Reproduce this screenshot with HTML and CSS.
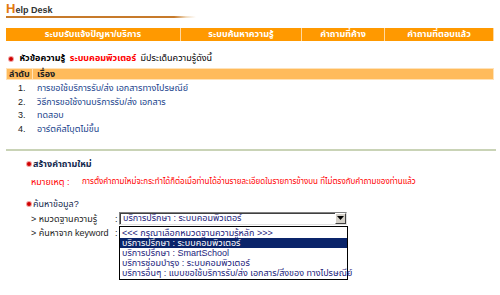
FILE: index.html
```html
<!DOCTYPE html>
<html lang="th">
<head>
<meta charset="utf-8">
<title>Help Desk</title>
<link rel="stylesheet" href="styles.css">
</head>
<body>
<div class="page">
  <div class="brand"><span class="brand-h">H</span><span class="brand-rest">elp Desk</span></div>
  <div class="brand-line"></div>

  <div class="nav">
    <div class="nav-item w1">ระบบรับแจ้งปัญหา/บริการ</div>
    <div class="nav-item w2">ระบบค้นหาความรู้</div>
    <div class="nav-item w3">คำถามที่ค้าง</div>
    <div class="nav-item w4">คำถามที่ตอบแล้ว</div>
  </div>

  <div class="topic">
    <span class="dot"></span>
    <span class="topic-label">หัวข้อความรู้</span>
    <span class="topic-name">ระบบคอมพิวเตอร์</span>
    <span class="topic-tail">มีประเด็นความรู้ดังนี้</span>
  </div>

  <div class="list">
    <div class="list-head">
      <div class="col-no">ลำดับ</div>
      <div class="col-title">เรื่อง</div>
    </div>
    <div class="rows">
      <div class="row"><div class="num">1.</div><div class="link">การขอใช้บริการรับ/ส่ง เอกสารทางไปรษณีย์</div></div>
      <div class="row"><div class="num">2.</div><div class="link">วิธีการขอใช้งานบริการรับ/ส่ง เอกสาร</div></div>
      <div class="row"><div class="num">3.</div><div class="link">ทดสอบ</div></div>
      <div class="row"><div class="num">4.</div><div class="link">อาร์ตคีสโบุตไม่ขึ้น</div></div>
    </div>
  </div>

  <div class="sep"></div>

  <div class="section">
    <div class="sec-title"><span class="dot"></span><span class="bold-navy">สร้างคำถามใหม่</span></div>
    <div class="note">
      <span class="note-label">หมายเหตุ :</span>
      <span class="note-text">การตั้งคำถามใหม่จะกระทำได้ก็ต่อเมื่อท่านได้อ่านรายละเอียดในรายการข้างบน ที่ไม่ตรงกับคำถามของท่านแล้ว</span>
    </div>
  </div>

  <div class="section search">
    <div class="sec-title"><span class="dot"></span><span class="plain">ค้นหาข้อมูล?</span></div>
    <div class="field first">
      <div class="field-label">&gt; หมวดฐานความรู้</div>
      <div class="colon">:</div>
      <div class="select-wrap">
        <div class="select">
          <span class="select-value">บริการปรึกษา : ระบบคอมพิวเตอร์</span>
          <span class="select-btn"><svg width="7" height="4" viewBox="0 0 7 4"><path d="M0 0h7L3.5 4z" fill="#000"/></svg></span>
        </div>
        <div class="dropdown">
          <div class="opt">&lt;&lt;&lt; กรุณาเลือกหมวดฐานความรู้หลัก &gt;&gt;&gt;</div>
          <div class="opt selected">บริการปรึกษา : ระบบคอมพิวเตอร์</div>
          <div class="opt">บริการปรึกษา : SmartSchool</div>
          <div class="opt">บริการซ่อมบำรุง : ระบบคอมพิวเตอร์</div>
          <div class="opt">บริการอื่นๆ : แบบขอใช้บริการรับ/ส่ง เอกสาร/สิ่งของ ทางไปรษณีย์</div>
        </div>
      </div>
    </div>
    <div class="field">
      <div class="field-label">&gt; ค้นหาจาก keyword</div>
      <div class="colon">:</div>
    </div>
  </div>
</div>
</body>
</html>
```

FILE: styles.css
```css
* { box-sizing: border-box; }
html, body { margin: 0; padding: 0; background: #fff; }
body {
  font-family: "Liberation Sans", "Noto Sans Thai", sans-serif;
  font-size: 9px;
  color: #000;
}
.page { width: 500px; min-height: 295px; padding: 3px 6px 0 6px; }

.brand { height: 12px; line-height: 12px; display: flex; align-items: baseline; }
.brand-h { color: #e2790f; font-weight: bold; font-size: 13px; }
.brand-rest { color: #333; font-weight: bold; font-size: 9px; }
.brand-line {
  margin-top: 1px;
  width: 190px;
  height: 2px;
  background: linear-gradient(to right, #c77a2a 0, #c77a2a 168px, #f1dcc0 180px, #fff 190px);
}

.nav {
  margin-top: 10px;
  display: flex;
  width: 488px;
  height: 13px;
  background: #ff9900;
}
.nav-item {
  color: #fff;
  font-weight: bold;
  line-height: 13px;
  text-align: center;
  border-right: 1px solid #ffd9a0;
  white-space: nowrap;
}
.w1 { width: 175px; }
.w2 { width: 121px; }
.w3 { width: 83px; }
.w4 { width: 109px; }

.dot {
  display: inline-block;
  width: 4px; height: 4px;
  border-radius: 50%;
  background: #d00000;
  box-shadow: 0 0 0 1px #f2a0a0;
  vertical-align: middle;
  margin-right: 4px;
}

.topic { margin-top: 11px; padding-left: 3px; height: 13px; line-height: 13px; white-space: nowrap; }
.topic-label { font-weight: bold; }
.topic-name { font-weight: bold; color: #ff0000; margin-left: 2px; }
.topic-tail { margin-left: 2px; }

.list { margin-top: 3px; width: 488px; }
.list-head {
  display: flex;
  height: 12px;
  background: #ffbb5c;
  border: 1px solid #ffe2b8;
  line-height: 10px;
  font-weight: bold;
  color: #222;
}
.list-head .col-no { width: 26px; padding-left: 2px; border-right: 1px solid #ffe2b8; }
.list-head .col-title { padding-left: 4px; }
.rows { padding-top: 2px; }
.row { display: flex; height: 13.7px; line-height: 13.7px; }
.num { width: 31px; padding-left: 12px; color: #222; }
.link { color: #203f8c; }

.sep { margin-top: 12px; width: 490px; height: 2px; background: #c9d3b6; }

.section { padding-left: 21px; }
.sec-title { margin-top: 7px; height: 13px; line-height: 13px; }
.sec-title .dot { margin-right: 2px; }
.bold-navy { font-weight: bold; color: #13284d; }
.plain { color: #13284d; }
.note { margin-top: 5px; display: flex; height: 12px; line-height: 12px; color: #ff0000; white-space: nowrap; }
.note-label { width: 55px; padding-left: 4px; }
.note-text { font-size: 8px; }

.search .sec-title { margin-top: 10px; }
.field { display: flex; height: 14px; line-height: 14px; color: #222; }
.field.first { margin-top: 1px; }
.field-label { width: 88px; padding-left: 4px; white-space: nowrap; }
.colon { width: 4px; }
.select-wrap { position: relative; }
.select {
  width: 228px;
  height: 13px;
  border: 1px solid;
  border-color: #808080 #e0e0e0 #e0e0e0 #808080;
  box-shadow: inset 1px 1px 0 #404040;
  display: flex;
  align-items: center;
  justify-content: space-between;
  background: #fff;
  color: #1a1a7a;
  padding-left: 3px;
  line-height: 11px;
}
.select-btn {
  width: 11px; height: 11px;
  background: #d4d0c8;
  border: 1px solid;
  border-color: #fff #404040 #404040 #fff;
  display: flex; align-items: center; justify-content: center;
}
.dropdown {
  position: absolute;
  left: 0; top: 14px;
  width: 229px;
  background: #fff;
  border: 1px solid #000;
  padding: 1px 0;
  z-index: 2;
}
.opt {
  height: 10px;
  line-height: 10px;
  padding-left: 2px;
  color: #1a1a7a;
  white-space: nowrap;
}
.opt.selected { background: #0a246a; color: #fff; }
```
